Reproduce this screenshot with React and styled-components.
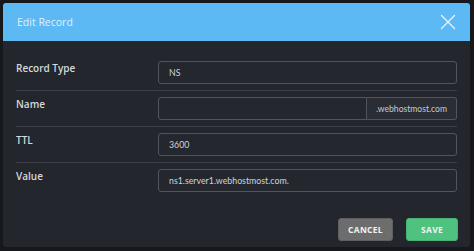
import React from 'react';
import styled, { createGlobalStyle } from 'styled-components';

const GlobalStyle = createGlobalStyle`
  html, body {
    margin: 0;
    padding: 0;
    background: #16181d;
    font-family: "Open Sans", "Liberation Sans", sans-serif;
  }
`;

const rows = [
  { label: 'Record Type', value: 'NS' },
  { label: 'Name', value: '', addon: '.webhostmost.com' },
  { label: 'TTL', value: '3600' },
  { label: 'Value', value: 'ns1.server1.webhostmost.com.' },
];

const App = () => {
  return (
    <>
      <GlobalStyle />
      <Page>
        <Modal>
          <Header>
            <Title>Edit Record</Title>
            <Close aria-label="close">
              <svg width="16" height="16" viewBox="0 0 16 16">
                <path
                  d="M1.5 1.5 L14.5 14.5 M14.5 1.5 L1.5 14.5"
                  stroke="#e3f3fd"
                  strokeWidth="1.4"
                  strokeLinecap="round"
                />
              </svg>
            </Close>
          </Header>

          <Body>
            {rows.map((row, i) => (
              <Row key={row.label} last={i === rows.length - 1}>
                <Label>{row.label}</Label>
                <Field>
                  <Input hasAddon={!!row.addon}>{row.value}</Input>
                  {row.addon && <Addon>{row.addon}</Addon>}
                </Field>
              </Row>
            ))}
          </Body>

          <Footer>
            <Button kind="cancel">CANCEL</Button>
            <Button kind="save">SAVE</Button>
          </Footer>
        </Modal>
      </Page>
    </>
  );
};

const Page = styled.div`
  width: 474px;
  height: 251px;
  padding: 3px 4px 4px 3px;
  box-sizing: border-box;
`;

const Modal = styled.div`
  width: 467px;
  height: 244px;
  background: #23262d;
  border-radius: 3px;
  display: flex;
  flex-direction: column;
  overflow: hidden;
`;

const Header = styled.div`
  height: 38px;
  background: #5db9f3;
  display: flex;
  align-items: center;
  justify-content: space-between;
  padding: 0 12px 0 14px;
  flex-shrink: 0;
`;

const Title = styled.div`
  color: #dff1fd;
  font-size: 10.5px;
  font-weight: 400;
`;

const Close = styled.div`
  display: flex;
  align-items: center;
  justify-content: center;
  width: 20px;
  height: 20px;
`;

const Body = styled.div`
  padding: 14px 13px 0 13px;
  flex: 1;
`;

const Row = styled.div`
  display: flex;
  align-items: flex-start;
  padding: 6px 0;
  border-bottom: ${p => (p.last ? 'none' : '1px solid #3a3e46')};
`;

const Label = styled.div`
  width: 142px;
  color: #d6d8dc;
  font-size: 10px;
  font-weight: 600;
`;

const Field = styled.div`
  flex: 1;
  display: flex;
  height: 23px;
`;

const Input = styled.div`
  flex: 1;
  box-sizing: border-box;
  height: 23px;
  border: 1px solid #50545c;
  border-radius: ${p => (p.hasAddon ? '3px 0 0 3px' : '3px')};
  background: #24272e;
  color: #d2d4d8;
  font-family: Lato, "Open Sans", sans-serif;
  font-size: 8.8px;
  display: flex;
  align-items: center;
  padding-left: 10px;
`;

const Addon = styled.div`
  width: 90px;
  box-sizing: border-box;
  height: 23px;
  border: 1px solid #50545c;
  border-left: none;
  border-radius: 0 3px 3px 0;
  background: #2a2d34;
  color: #c8cacf;
  font-family: Lato, "Open Sans", sans-serif;
  font-size: 8.6px;
  display: flex;
  align-items: center;
  justify-content: center;
`;

const Footer = styled.div`
  display: flex;
  justify-content: flex-end;
  gap: 13px;
  padding: 0 12px 6px 0;
`;

const Button = styled.div`
  height: 23px;
  width: ${p => (p.kind === 'save' ? '52px' : '55px')};
  box-sizing: border-box;
  border-radius: 3px;
  background: ${p => (p.kind === 'save' ? '#4fc27f' : '#6d6d6e')};
  border: 1px solid ${p => (p.kind === 'save' ? '#45b372' : '#5f5f60')};
  color: #f2f4f2;
  font-size: 8.5px;
  font-weight: 700;
  letter-spacing: 0.3px;
  display: flex;
  align-items: center;
  justify-content: center;
`;

export default App;
